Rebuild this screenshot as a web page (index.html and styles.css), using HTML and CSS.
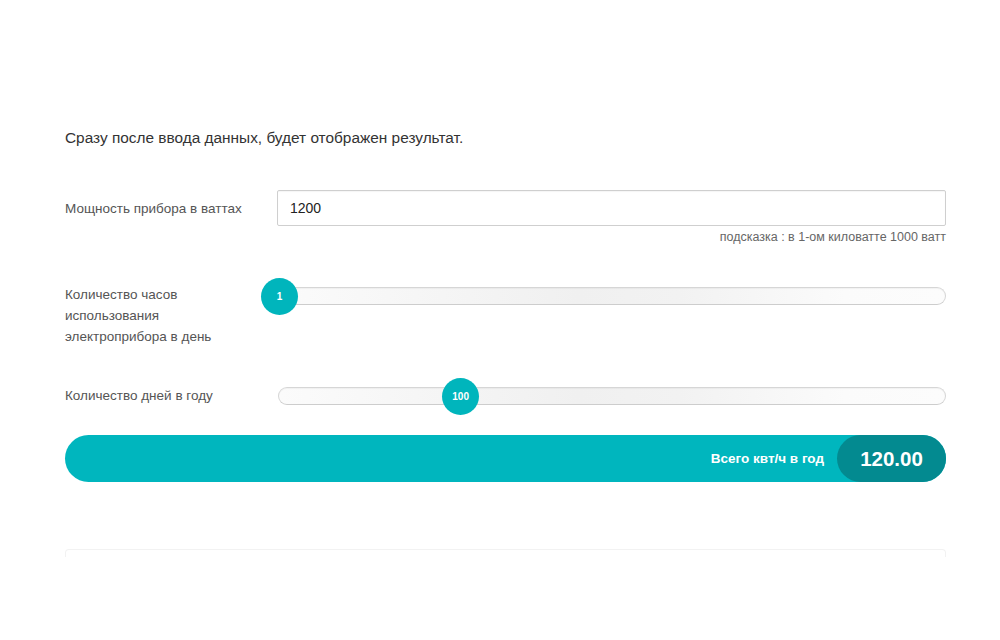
FILE: index.html
```html
<!DOCTYPE html>
<html lang="ru">
<head>
<meta charset="utf-8">
<title>Калькулятор</title>
<link rel="stylesheet" href="styles.css">
</head>
<body>
<div class="wrap">
  <p class="intro">Сразу после ввода данных, будет отображен результат.</p>

  <div class="row row-input">
    <label class="label">Мощность прибора в ваттах</label>
    <input class="field" type="text" value="1200">
  </div>
  <div class="hint">подсказка : в 1-ом киловатте 1000 ватт</div>

  <div class="row row-top">
    <div class="label label-multi">Количество часов<br>использования<br>электроприбора в день</div>
    <div class="slider slider-first">
      <div class="track">
        <span class="knob" style="left: 0%">1</span>
      </div>
    </div>
  </div>

  <div class="row row-center">
    <div class="label">Количество дней в году</div>
    <div class="slider">
      <div class="track">
        <span class="knob" style="left: 27.2%">100</span>
      </div>
    </div>
  </div>

  <div class="result">
    <span class="result-label">Всего квт/ч в год</span>
    <span class="result-value">120.00</span>
  </div>

  <div class="panel"></div>
</div>
</body>
</html>
```

FILE: styles.css
```css
* { box-sizing: border-box; }
html, body { margin: 0; padding: 0; background: #fff; }
body {
  font-family: "Liberation Sans", Arial, sans-serif;
  color: #444;
}
.wrap {
  padding: 128px 54px 0 65px;
}
.intro {
  margin: 0;
  font-size: 15.4px;
  line-height: 20px;
  color: #333;
}
.row {
  display: flex;
}
.row-input {
  margin-top: 42px;
  align-items: center;
}
.label {
  flex: 0 0 212px;
  font-size: 13.5px;
  line-height: 21px;
  color: #555;
}
.field {
  flex: 1;
  height: 36px;
  border: 1px solid #cfcfcf;
  border-radius: 2px;
  padding: 0 12px;
  font-family: "Liberation Sans", Arial, sans-serif;
  font-size: 14px;
  color: #222;
  outline: none;
  box-shadow: inset 0 1px 1px rgba(0,0,0,0.04);
}
.hint {
  margin-top: 3px;
  text-align: right;
  font-size: 12.5px;
  line-height: 16px;
  color: #666;
}
.row-top {
  margin-top: 39px;
  align-items: flex-start;
}
.row-center {
  margin-top: 38px;
  align-items: center;
}
.slider {
  flex: 1;
  padding-left: 1px;
}
.slider-first {
  padding-top: 3px;
}
.track {
  position: relative;
  height: 18px;
  border: 1px solid #d6d6d6;
  border-bottom-color: #cdcdcd;
  border-radius: 9px;
  background: linear-gradient(to right, #fbfbfb 0%, #f0f0f0 45%, #f2f2f2 60%, #fbfbfb 85%, #fcfcfc 100%);
  box-shadow: inset 0 1px 1px rgba(0,0,0,0.04);
}
.knob {
  position: absolute;
  top: -10px;
  width: 37px;
  height: 37px;
  margin-left: -18px;
  border-radius: 50%;
  background: #00b5bc;
  color: #fff;
  font-size: 10px;
  font-weight: bold;
  line-height: 37px;
  text-align: center;
}
.result {
  margin-top: 29px;
  height: 47px;
  border-radius: 24px;
  background: #00b6be;
  display: flex;
  justify-content: flex-end;
  align-items: center;
  gap: 13px;
}
.result-label {
  color: #fff;
  font-size: 13.5px;
  font-weight: bold;
}
.result-value {
  width: 109px;
  height: 47px;
  border-radius: 24px;
  background: #038a90;
  color: #fff;
  font-size: 20.5px;
  font-weight: bold;
  line-height: 47px;
  text-align: center;
}
.panel {
  margin-top: 67px;
  height: 8px;
  border: 1px solid #f2f2f2;
  border-bottom: none;
  border-radius: 4px 4px 0 0;
}
```
